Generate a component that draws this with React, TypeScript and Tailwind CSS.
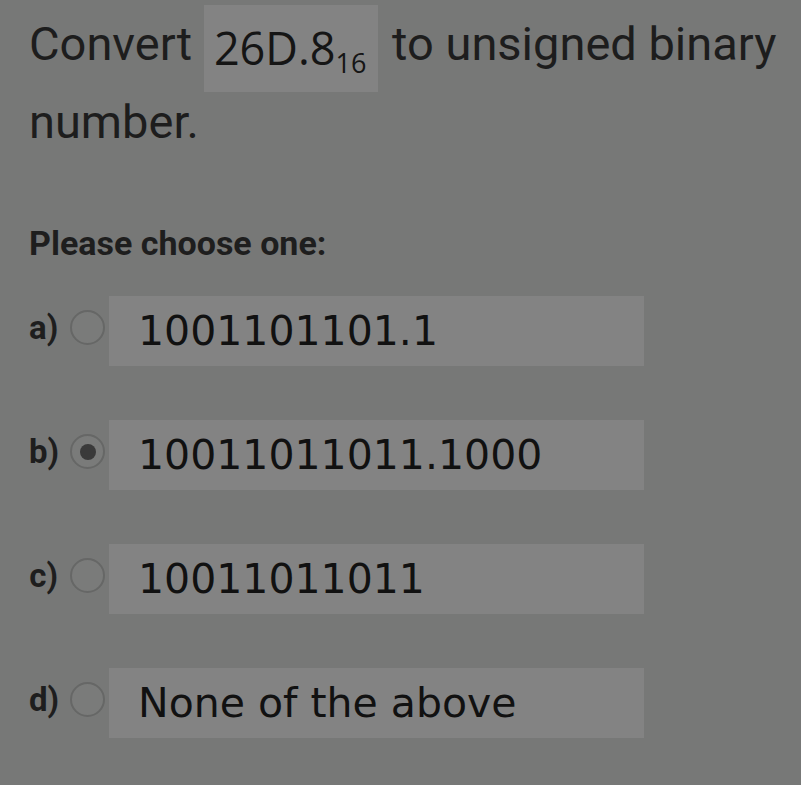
import React from "react";

const options = [
  { key: "a)", text: "1001101101.1", checked: false },
  { key: "b)", text: "10011011011.1000", checked: true },
  { key: "c)", text: "10011011011", checked: false },
  { key: "d)", text: "None of the above", checked: false },
];

export default function App() {
  return (
    <div className="w-[801px] h-[785px] bg-[#777877] overflow-hidden pl-[29px] pt-[5px] text-[#1d1d1d]">
      <p className="text-[47px] leading-[78px] font-['Roboto',sans-serif] pr-[10px]">
        Convert{" "}
        <span className="inline-block align-top h-[87px] -mb-[9px] bg-[#838383] pl-[10px] pr-[12px] mr-[2px] font-['Open_Sans',sans-serif] text-[45px] leading-[85px] text-[#151515]">
          26D.8
          <span className="text-[27px] align-[-8px]">16</span>
        </span>{" "}
        to unsigned binary number.
      </p>
      <p className="mt-[62px] font-['Roboto',sans-serif] font-bold text-[34px] leading-[40px] text-[#1e1e1e]">
        Please choose one:
      </p>
      <div className="mt-[33px] flex flex-col gap-[54px]">
        {options.map((o) => (
          <div key={o.key} className="flex items-center h-[70px]">
            <div className="flex items-center mb-[7px]">
              <span className="w-[29px] text-right font-['Roboto',sans-serif] font-bold text-[33px] leading-[40px] text-[#1e1e1e]">
                {o.key}
              </span>
              <span className="ml-[12px] w-[35px] h-[35px] rounded-full border-2 border-[#666766] bg-[#7a7b7a] flex items-center justify-center">
                {o.checked && <span className="w-[16px] h-[16px] rounded-full bg-[#3a3a3a]" />}
              </span>
            </div>
            <div className="ml-[4px] w-[535px] h-[70px] bg-[#838383] flex items-center pl-[29px]">
              <span className="font-['DejaVu_Sans',sans-serif] text-[41px] leading-none text-[#111111]">
                {o.text}
              </span>
            </div>
          </div>
        ))}
      </div>
    </div>
  );
}
